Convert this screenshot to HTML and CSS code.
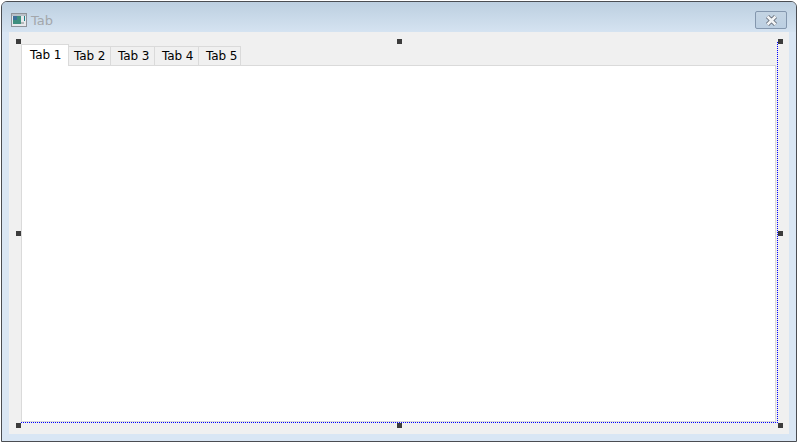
FILE: index.html
```html
<!DOCTYPE html>
<html lang="en">
<head>
<meta charset="utf-8">
<title>Tab</title>
<link rel="stylesheet" href="styles.css">
</head>
<body>
<div class="window">
  <header class="titlebar">
    <svg class="app-icon" width="16" height="14" viewBox="0 0 16 14">
      <rect x="0.5" y="0.5" width="15" height="13" fill="#e6e9ec" stroke="#8e9299"/>
      <rect x="1" y="1" width="14" height="2" fill="#b9c0c8"/>
      <rect x="2" y="3" width="8" height="8" fill="#3f8f7f"/>
      <rect x="2" y="3" width="4" height="4" fill="#3d6f9a"/>
      <rect x="10" y="9" width="3" height="2" fill="#b4b8ba"/>
      <rect x="13" y="3" width="1" height="5" fill="#1f7f86"/>
    </svg>
    <span class="title">Tab</span>
    <button class="close" type="button" aria-label="Close">
      <svg width="13" height="11" viewBox="0 0 13 11">
        <path d="M2.5 1.5 L10.5 9.5 M10.5 1.5 L2.5 9.5" stroke="#5a616c" stroke-width="4.2" fill="none"/>
        <path d="M2.5 1.5 L10.5 9.5 M10.5 1.5 L2.5 9.5" stroke="#f2f4f6" stroke-width="2.6" fill="none"/>
      </svg>
    </button>
  </header>
  <main class="client">
    <div class="form">
      <div class="tabbar">
        <div class="tab active">Tab 1</div>
        <div class="tab">Tab 2</div>
        <div class="tab">Tab 3</div>
        <div class="tab">Tab 4</div>
        <div class="tab">Tab 5</div>
      </div>
      <div class="pane"></div>
    </div>
    <span class="dots dots-v"></span>
    <span class="dots dots-h"></span>
    <span class="handle h-tl"></span>
    <span class="handle h-tc"></span>
    <span class="handle h-tr"></span>
    <span class="handle h-ml"></span>
    <span class="handle h-mr"></span>
    <span class="handle h-bl"></span>
    <span class="handle h-bc"></span>
    <span class="handle h-br"></span>
  </main>
</div>
</body>
</html>
```
FILE: styles.css
```css
* { box-sizing: border-box; }
html, body { margin: 0; padding: 0; background: #fff; }
body { width: 799px; height: 445px; overflow: hidden; padding: 1px 1px 0; font-family: "DejaVu Sans", sans-serif; }
.window {
  width: 796px;
  height: 441px;
  border: 1px solid #4a4d52;
  border-radius: 6px 6px 0 0;
  background: #d9e6f4;
  display: flex;
  flex-direction: column;
  padding: 0 7px 7px;
}
.titlebar {
  height: 30px;
  margin: 0 -7px;
  padding: 6px 9px 0 9px;
  display: flex;
  align-items: center;
  background: linear-gradient(#bccfe0, #d5e3f1);
  border-radius: 5px 5px 0 0;
  flex: none;
}
.app-icon { flex: none; }
.title { margin-left: 4px; font-size: 13px; color: #a3a7ab; }
.close {
  margin-left: auto;
  width: 32px;
  height: 18px;
  padding: 0;
  border: 1px solid #8497ae;
  border-radius: 2px;
  background: linear-gradient(#c4d4e3, #bccfe2);
  display: flex;
  align-items: center;
  justify-content: center;
}
.client {
  position: relative;
  flex: 1;
  background: #f0f0f0;
}
.form {
  height: 100%;
  padding: 12px 13px 12px 12px;
  display: flex;
  flex-direction: column;
}
.tabbar { display: flex; height: 21px; align-items: flex-end; flex: none; }
.tab {
  height: 19px;
  width: 44px;
  padding-left: 7px;
  border-top: 1px solid #dadada;
  border-right: 1px solid #dadada;
  background: #f0f0f0;
  font-size: 12px;
  line-height: 18px;
  letter-spacing: -0.1px;
  color: #000;
  white-space: nowrap;
}
.tab:nth-child(2) { width: 42px; padding-left: 5px; }
.tab:nth-child(5) { width: 42px; }
.tab.active {
  height: 22px;
  width: 48px;
  margin-bottom: -1px;
  position: relative;
  padding-left: 8px;
  background: #fff;
  border-left: 1px solid #dadada;
  line-height: 20px;
}
.pane {
  flex: 1;
  background: #fff;
  border: 1px solid #dadada;
}
.dots { position: absolute; }
.dots-v {
  left: 768px;
  top: 10px;
  width: 1px;
  height: 381px;
  background: repeating-linear-gradient(to bottom, #0000ff 0 1px, transparent 1px 2px);
}
.dots-h {
  left: 12px;
  top: 390px;
  width: 757px;
  height: 1px;
  background: repeating-linear-gradient(to right, #0000ff 0 1px, transparent 1px 2px);
}
.handle { position: absolute; width: 5px; height: 5px; background: #3c3c3c; }
.h-tl { left: 7px; top: 7px; }
.h-tc { left: 388px; top: 7px; }
.h-tr { left: 769px; top: 7px; }
.h-ml { left: 7px; top: 199px; }
.h-mr { left: 769px; top: 199px; }
.h-bl { left: 7px; top: 391px; }
.h-bc { left: 388px; top: 391px; }
.h-br { left: 769px; top: 391px; }
```
